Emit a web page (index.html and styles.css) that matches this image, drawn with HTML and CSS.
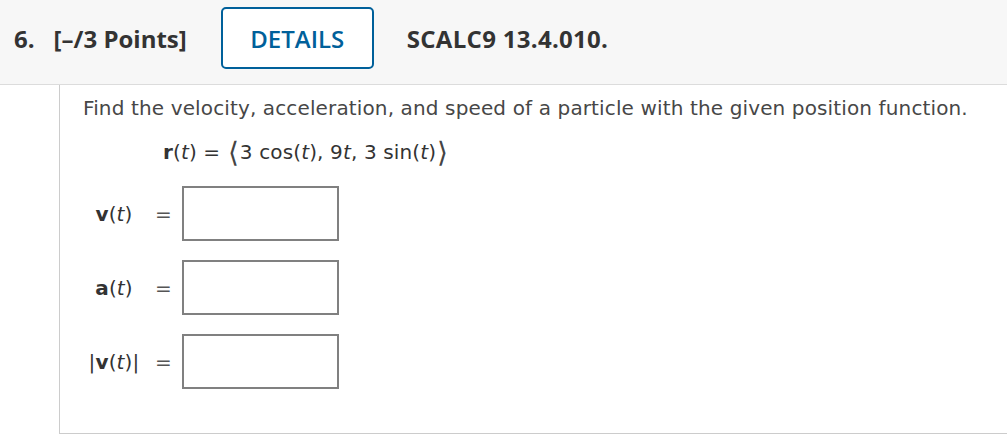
FILE: index.html
```html
<!DOCTYPE html>
<html>
<head>
<meta charset="utf-8">
<link rel="stylesheet" href="styles.css">
</head>
<body>
<header class="qhead">
  <span class="qnum">6.</span>
  <span class="qpts">[–/3 Points]</span>
  <button class="details">DETAILS</button>
  <span class="qid">SCALC9 13.4.010.</span>
</header>
<main class="panel">
  <p class="prompt">Find the velocity, acceleration, and speed of a particle with the given position function.</p>
  <p class="formula"><b>r</b>(<i>t</i>) = <span class="ang">⟨</span>3 cos(<i>t</i>), 9<i>t</i>, 3 sin(<i>t</i>)<span class="ang">⟩</span></p>
  <div class="answers">
    <span class="lbl"><b>v</b>(<i>t</i>)</span><span class="eq">=</span><span class="box"></span>
    <span class="lbl"><b>a</b>(<i>t</i>)</span><span class="eq">=</span><span class="box"></span>
    <span class="lbl">|<b>v</b>(<i>t</i>)|</span><span class="eq">=</span><span class="box"></span>
  </div>
</main>
</body>
</html>
```
FILE: styles.css
```css
html, body {
  margin: 0;
  padding: 0;
  background: #ffffff;
}
.qhead {
  box-sizing: border-box;
  height: 85px;
  padding: 0 0 8px 14px;
  background: #f7f7f7;
  border-bottom: 1px solid #dcdcdc;
  display: flex;
  align-items: center;
  font-family: "Open Sans", "Noto Sans", sans-serif;
  font-weight: 700;
  font-size: 24px;
  color: #333333;
}
.qnum {
  margin-right: 19px;
}
.qpts {
  margin-right: 34px;
}
.details {
  box-sizing: border-box;
  width: 153px;
  height: 62px;
  border: 2px solid #00609a;
  border-radius: 5px;
  background: #ffffff;
  color: #00609a;
  font-family: "Open Sans", "Noto Sans", sans-serif;
  font-weight: 600;
  font-size: 24px;
  padding: 0;
  margin-right: 33px;
}
.qid {
  letter-spacing: 0.3px;
}
.panel {
  margin-left: 59px;
  height: 349px;
  border-left: 1px solid #cccccc;
  border-bottom: 1px solid #cccccc;
  box-sizing: border-box;
  padding: 11px 0 0 23px;
  font-family: "DejaVu Sans", Verdana, sans-serif;
  font-size: 20px;
  letter-spacing: 0.13px;
  color: #474747;
}
.prompt {
  margin: 0;
  line-height: 24px;
}
.formula {
  margin: 20px 0 0 80px;
  line-height: 24px;
  color: #333333;
}
.ang {
  display: inline-block;
  padding: 0 1px;
  font-size: 28px;
  font-weight: 300;
  color: #444444;
  vertical-align: -3px;
  line-height: 0;
}
.answers {
  display: grid;
  grid-template-columns: 62px 37px 157px;
  row-gap: 19px;
  align-items: center;
  margin-top: 22px;
}
.lbl {
  text-align: center;
  color: #333333;
}
.eq {
  text-align: center;
  color: #555555;
}
.box {
  box-sizing: border-box;
  height: 55px;
  border: 2px solid #808080;
  background: #ffffff;
}
```
